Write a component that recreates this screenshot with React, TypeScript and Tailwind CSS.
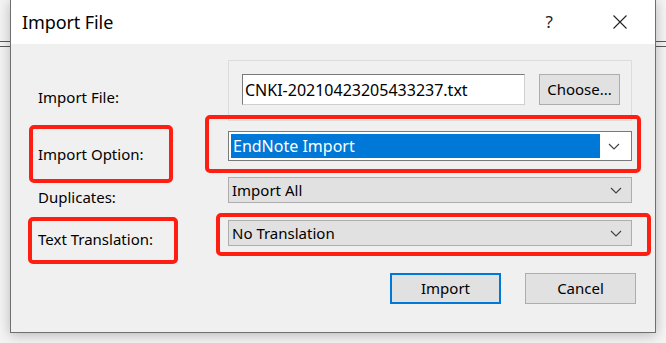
import React from "react";

const font = { fontFamily: '"Noto Sans", "Segoe UI", sans-serif' };

const Chevron = () => (
  <svg width="12" height="7" viewBox="0 0 12 7" className="mr-[9px]">
    <path d="M1 1 L6 6 L11 1" fill="none" stroke="#404040" strokeWidth="1.1" />
  </svg>
);

const RedBox = ({ className }: { className: string }) => (
  <div className={`absolute border-4 border-[#ff1e12] rounded-[5px] pointer-events-none ${className}`} />
);

export default function App() {
  return (
    <div className="relative w-[666px] h-[343px] bg-[#f4f4f4] overflow-hidden text-[#000]" style={font}>
      {/* window behind */}
      <div className="absolute left-0 right-0 top-[41px] h-[1px] bg-[#5a5a5a]" />
      <div className="absolute left-0 right-0 top-[46px] h-[1px] bg-[#5a5a5a]" />

      <div className="relative ml-[10px] w-[646px] h-[333px] border border-t-0 border-[#6f6f6f] bg-[#f0f0f0] shadow-[0_2px_12px_rgba(0,0,0,0.25)] flex flex-col">
        {/* title bar */}
        <div className="h-[44px] bg-white flex items-center">
          <span className="ml-[11px] text-[18px] tracking-[-0.1px]">Import File</span>
          <span className="ml-auto text-[17px] text-[#222] mr-[59px]">?</span>
          <svg width="16" height="14" viewBox="0 0 16 14" className="mr-[27px]">
            <path d="M1.5 0.5 L14.5 13.5 M14.5 0.5 L1.5 13.5" stroke="#222" strokeWidth="1.1" fill="none" />
          </svg>
        </div>

        {/* body */}
        <div className="flex flex-col pl-[27px] text-[15px]">
          <div className="flex items-center h-[61px] mt-[16px]">
            <span className="w-[190px] pt-[13px]">Import File:</span>
            <div className="w-[404px] h-[61px] border border-[#dcdcdc] flex items-start pt-[13px] pl-[13px]">
              <div className="w-[283px] h-[31px] border border-[#7a7a7a] border-b-[#cfcfcf] border-r-[#cfcfcf] bg-white flex items-center pl-[2px] text-[16px]">
                CNKI-20210423205433237.txt
              </div>
              <div className="ml-[14px] w-[81px] h-[31px] border border-[#adadad] bg-[#e1e1e1] flex items-center justify-center">
                Choose...
              </div>
            </div>
          </div>

          <div className="flex items-center h-[30px] mt-[10px]">
            <span className="w-[190px] pt-[16px]">Import Option:</span>
            <div className="w-[404px] h-[30px] border border-[#7a7a7a] bg-white flex items-center p-[2px]">
              <div className="flex-1 h-full bg-[#0078d7] text-white text-[16px] flex items-center pl-[2px]">
                EndNote Import
              </div>
              <div className="w-[29px] flex justify-end">
                <Chevron />
              </div>
            </div>
          </div>

          <div className="flex items-center h-[26px] mt-[16px]">
            <span className="w-[190px] pt-[14px]">Duplicates:</span>
            <div className="w-[404px] h-[26px] border border-[#adadad] bg-[#e1e1e1] flex items-center pl-[3px]">
              <span className="flex-1">Import All</span>
              <Chevron />
            </div>
          </div>

          <div className="flex items-center h-[26px] mt-[17px]">
            <span className="w-[190px] pt-[12px]">Text Translation:</span>
            <div className="w-[404px] h-[26px] border border-[#adadad] bg-[#e1e1e1] flex items-center pl-[3px]">
              <span className="flex-1">No Translation</span>
              <Chevron />
            </div>
          </div>

          <div className="flex justify-end h-[31px] mt-[27px] mr-[19px] gap-[24px]">
            <div className="w-[111px] h-[31px] border-2 border-[#0078d7] bg-[#e1e1e1] flex items-center justify-center">
              Import
            </div>
            <div className="w-[111px] h-[31px] border border-[#adadad] bg-[#e1e1e1] flex items-center justify-center">
              Cancel
            </div>
          </div>
        </div>
      </div>

      <RedBox className="left-[29px] top-[125px] w-[144px] h-[58px]" />
      <RedBox className="left-[205px] top-[115px] w-[436px] h-[58px]" />
      <RedBox className="left-[28px] top-[217px] w-[150px] h-[47px]" />
      <RedBox className="left-[216px] top-[213px] w-[435px] h-[43px]" />
    </div>
  );
}
